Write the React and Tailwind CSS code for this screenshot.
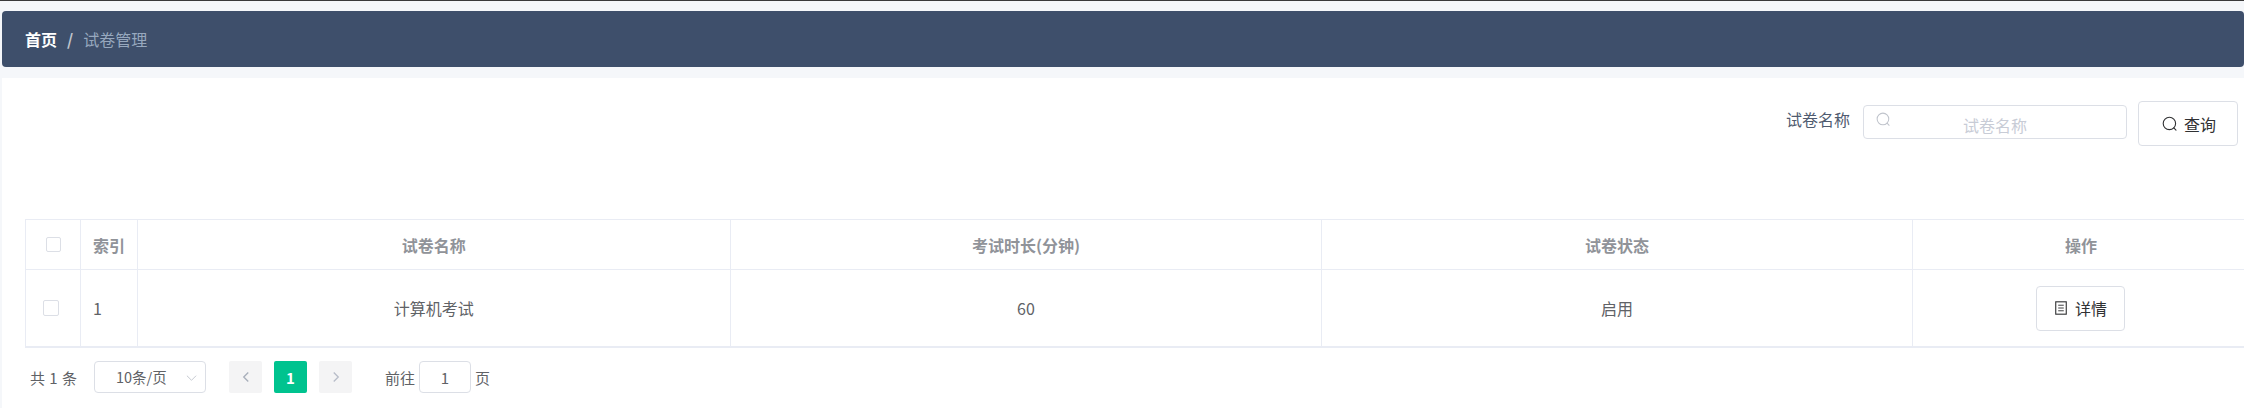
import React from "react";

const Search = ({ className }) => (
  <svg viewBox="0 0 16 16" fill="none" stroke="currentColor" strokeWidth="1.1" className={className}>
    <circle cx="7.4" cy="7.4" r="6.2" />
    <path d="M11.8 11.8L14 14.2" strokeLinecap="round" />
  </svg>
);

const Doc = ({ className }) => (
  <svg viewBox="0 0 13 15" fill="none" stroke="currentColor" strokeWidth="1.2" className={className}>
    <rect x="0.8" y="0.8" width="11.4" height="13.4" />
    <path d="M3.5 4.5H9.5M3.5 7.5H9.5M3.5 10.5H9.5" strokeWidth="1" />
  </svg>
);

const Checkbox = ({ className }) => (
  <span className={`block rounded-[2px] border border-[#dcdfe6] bg-white ${className}`} />
);

const Chevron = ({ dir, className }) => (
  <svg viewBox="0 0 10 16" fill="none" stroke="currentColor" strokeWidth="1.8" className={className}>
    <path d={dir === "left" ? "M8 2L2 8L8 14" : "M2 2L8 8L2 14"} />
  </svg>
);

const cols = "grid grid-cols-[56px_56.5px_593.5px_591px_591px_338px]";

export default function App() {
  return (
    <div
      className="h-[408px] w-[2244px] overflow-hidden bg-[#f5f7fa] text-[16px] text-[#606266]"
      style={{ fontFamily: '"Noto Sans CJK SC", sans-serif' }}
    >
      <div className="flex h-full flex-col">
        <div className="h-[1px] bg-[#3a3a3a]" />
        <div className="ml-[2px] mt-[10px] flex h-[56px] items-center rounded-[4px] bg-[#3e4f6b] pl-[23px] leading-none">
          <span className="font-bold text-white">首页</span>
          <span className="mx-[10px] font-bold text-[#c0c4cc]">/</span>
          <span className="text-[#97a8be]">试卷管理</span>
        </div>
        <div className="ml-[2px] mt-[11px] flex-1 overflow-hidden bg-white">
          <div className="flex items-start justify-end pr-[6px] pt-[23px]">
            <span className="mt-[4px] leading-[28px] text-[#4f5b6f]">试卷名称</span>
            <div className="relative ml-[13px] mt-[4px] flex h-[34px] w-[264px] items-center justify-center rounded-[4px] border border-[#dcdfe6] pt-[5px] leading-none text-[#c8ccd6]">
              <Search className="absolute left-[12px] top-[6px] h-[15px] w-[15px] text-[#c0c4cc]" />
              试卷名称
            </div>
            <button className="ml-[11px] flex h-[45px] w-[100px] items-center justify-center gap-[6px] rounded-[4px] border border-[#dcdfe6] bg-white pl-[2px] text-[#303133]">
              <Search className="h-[16px] w-[16px]" />
              <span className="leading-none">查询</span>
            </button>
          </div>
          <div className="ml-[23px] mt-[73px] w-[2226px]">
            <div className={`${cols} h-[51px] border-y border-[#e9ecf4] font-bold text-[#909399]`}>
              <div className="flex items-center justify-center border-x border-[#e9ecf4]">
                <Checkbox className="h-[15px] w-[15px]" />
              </div>
              <div className="flex items-center border-r border-[#e9ecf4] pl-[12px] leading-none">索引</div>
              <div className="flex items-center justify-center border-r border-[#e9ecf4] leading-none">试卷名称</div>
              <div className="flex items-center justify-center border-r border-[#e9ecf4] leading-none">考试时长(分钟)</div>
              <div className="flex items-center justify-center border-r border-[#e9ecf4] leading-none">试卷状态</div>
              <div className="flex items-center justify-center pr-[2px] leading-none">操作</div>
            </div>
            <div className={`${cols} h-[78px] border-b-2 border-[#e9ecf4]`}>
              <div className="flex items-center justify-center border-x border-[#e9ecf4] pr-[5px]">
                <Checkbox className="h-[16px] w-[16px]" />
              </div>
              <div className="flex items-center border-r border-[#e9ecf4] pl-[12px] leading-none">1</div>
              <div className="flex items-center justify-center border-r border-[#e9ecf4] leading-none">计算机考试</div>
              <div className="flex items-center justify-center border-r border-[#e9ecf4] leading-none">60</div>
              <div className="flex items-center justify-center border-r border-[#e9ecf4] leading-none">启用</div>
              <div className="flex items-center justify-center pr-[4px]">
                <button className="flex h-[45px] w-[89px] items-center justify-center gap-[8px] rounded-[4px] border border-[#dcdfe6] bg-white pl-[2px] text-[#303133]">
                  <Doc className="h-[14px] w-[12px]" />
                  <span className="leading-none">详情</span>
                </button>
              </div>
            </div>
            <div className="mt-[13px] flex h-[32px] items-center text-[15px] leading-none">
              <span className="ml-[5px] flex w-[47px] justify-between whitespace-nowrap">
                <span>共</span>
                <span>1</span>
                <span>条</span>
              </span>
              <div className="relative ml-[17px] flex h-[32px] w-[112px] items-center rounded-[4px] border border-[#dcdfe6] pl-[21px] text-[14.5px]">
                10条/页
                <svg viewBox="0 0 12 8" fill="none" stroke="#c0c4cc" strokeWidth="1" className="absolute right-[8px] top-[12px] h-[8px] w-[11px]">
                  <path d="M1 1.5L6 6.5L11 1.5" />
                </svg>
              </div>
              <div className="ml-[23px] flex h-[32px] w-[33px] items-center justify-center rounded-[2px] bg-[#f4f4f5] text-[#a8afbb]">
                <Chevron dir="left" className="h-[12px] w-[8px]" />
              </div>
              <div className="ml-[12px] flex h-[32px] w-[33px] items-center justify-center rounded-[2px] bg-[#00c38f] font-bold text-white">1</div>
              <div className="ml-[12px] flex h-[32px] w-[33px] items-center justify-center rounded-[2px] bg-[#f4f4f5] text-[#b8bdc9]">
                <Chevron dir="right" className="h-[12px] w-[8px]" />
              </div>
              <span className="ml-[33px]">前往</span>
              <div className="ml-[4px] flex h-[32px] w-[52px] items-center justify-center rounded-[4px] border border-[#dcdfe6]">1</div>
              <span className="ml-[4px]">页</span>
            </div>
          </div>
        </div>
      </div>
    </div>
  );
}
